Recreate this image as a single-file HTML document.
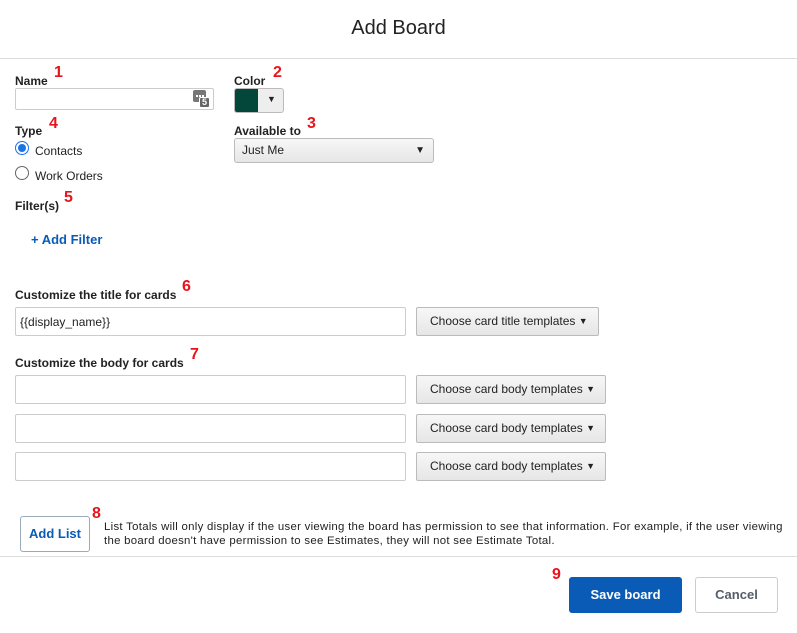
<!DOCTYPE html>
<html><head><meta charset="utf-8"><style>
*{box-sizing:border-box;margin:0;padding:0}
body{width:797px;height:633px;background:#fff;font-family:"Liberation Sans",Arial,sans-serif;color:#222;position:relative;overflow:hidden}
.a{position:absolute}
.lbl{font-size:12px;font-weight:bold;color:#222}
.num{color:#e8141b;font-weight:bold;font-size:16px}
.inp{border:1px solid #ccc;background:#fff;border-radius:2px}
.tb{border:1px solid #bbb;border-radius:2px;background:linear-gradient(#f7f7f7,#e6e6e6);font-size:12px;color:#222;height:29px;line-height:27px;padding-left:13px}
.tb i{font-style:normal;font-size:9px;vertical-align:1px}
.t{font-size:12px;color:#222}
</style></head><body>
<div class="a" style="left:0;top:0;width:797px;height:59px;border-bottom:1px solid #ddd"></div>
<div class="a" style="left:0;top:17px;width:797px;text-align:center;font-size:20px;color:#222">Add Board</div>

<div class="a lbl" style="left:15px;top:74px">Name</div>
<div class="a num" style="left:54px;top:64px">1</div>
<div class="a inp" style="left:15px;top:88px;width:199px;height:22px"></div>
<div class="a" style="left:193px;top:90px;width:17px;height:18px">
<div class="a" style="left:0;top:0;width:13px;height:12px;background:#777;border-radius:2px"></div>
<div class="a" style="left:3px;top:5px;width:8px;height:2px;border-top:2px dotted #fff"></div>
<div class="a" style="left:6px;top:7px;width:11px;height:11px;background:#666;border:1px solid #fff;border-radius:2px;color:#fff;font-size:9px;font-weight:bold;text-align:center;line-height:9px">5</div></div>

<div class="a lbl" style="left:234px;top:74px">Color</div>
<div class="a num" style="left:273px;top:64px">2</div>
<div class="a" style="left:234px;top:88px;width:50px;height:25px;border:1px solid #bbb;border-radius:3px;background:#eee;overflow:hidden">
<div class="a" style="left:0;top:0;width:23px;height:25px;background:#02473a"></div>
<div class="a" style="left:32px;top:5px;font-size:9px">▼</div></div>

<div class="a lbl" style="left:15px;top:124px">Type</div>
<div class="a num" style="left:49px;top:115px">4</div>
<div class="a" style="left:15px;top:141px;width:14px;height:14px;border-radius:50%;border:1px solid #1a73e8;background:#fff"><div class="a" style="left:2px;top:2px;width:8px;height:8px;border-radius:50%;background:#1a73e8"></div></div>
<div class="a t" style="left:35px;top:144px">Contacts</div>
<div class="a" style="left:15px;top:166px;width:14px;height:14px;border-radius:50%;border:1px solid #666;background:#fff"></div>
<div class="a t" style="left:35px;top:169px">Work Orders</div>

<div class="a lbl" style="left:234px;top:124px">Available to</div>
<div class="a num" style="left:307px;top:115px">3</div>
<div class="a tb" style="left:234px;top:138px;width:200px;height:25px;line-height:23px;padding-left:7px;border-radius:3px">Just Me<span style="position:absolute;right:8px;font-size:10px">▼</span></div>

<div class="a lbl" style="left:15px;top:199px">Filter(s)</div>
<div class="a num" style="left:64px;top:189px">5</div>
<div class="a" style="left:31px;top:232px;font-size:13px;font-weight:bold;color:#0a5bb5">+ Add Filter</div>

<div class="a lbl" style="left:15px;top:288px">Customize the title for cards</div>
<div class="a num" style="left:182px;top:278px">6</div>
<div class="a inp" style="left:15px;top:307px;width:391px;height:29px"></div>
<div class="a t" style="left:20px;top:315px">{{display_name}}</div>
<div class="a tb" style="left:416px;top:307px;width:183px">Choose card title templates <i>▼</i></div>

<div class="a lbl" style="left:15px;top:356px">Customize the body for cards</div>
<div class="a num" style="left:190px;top:346px">7</div>
<div class="a inp" style="left:15px;top:375px;width:391px;height:29px"></div>
<div class="a tb" style="left:416px;top:375px;width:190px">Choose card body templates <i>▼</i></div>
<div class="a inp" style="left:15px;top:414px;width:391px;height:29px"></div>
<div class="a tb" style="left:416px;top:414px;width:190px">Choose card body templates <i>▼</i></div>
<div class="a inp" style="left:15px;top:452px;width:391px;height:29px"></div>
<div class="a tb" style="left:416px;top:452px;width:190px">Choose card body templates <i>▼</i></div>

<div class="a" style="left:20px;top:516px;width:70px;height:36px;border:1px solid #9ab;border-radius:3px;font-size:13px;font-weight:bold;color:#0a5bb5;text-align:center;line-height:34px">Add List</div>
<div class="a num" style="left:92px;top:505px">8</div>
<div class="a" style="left:104px;top:520px;font-size:11.4px;letter-spacing:0.29px;line-height:14px;color:#222;white-space:nowrap">List Totals will only display if the user viewing the board has permission to see that information. For example, if the user viewing<br>the board doesn't have permission to see Estimates, they will not see Estimate Total.</div>

<div class="a" style="left:0;top:556px;width:797px;border-top:1px solid #ddd"></div>
<div class="a num" style="left:552px;top:566px">9</div>
<div class="a" style="left:569px;top:577px;width:113px;height:36px;background:#0a5bb5;border-radius:3px;color:#fff;font-size:13px;font-weight:bold;text-align:center;line-height:36px">Save board</div>
<div class="a" style="left:695px;top:577px;width:83px;height:36px;border:1px solid #ccc;border-radius:3px;color:#555d6b;font-size:13px;font-weight:bold;text-align:center;line-height:34px">Cancel</div>
</body></html>
